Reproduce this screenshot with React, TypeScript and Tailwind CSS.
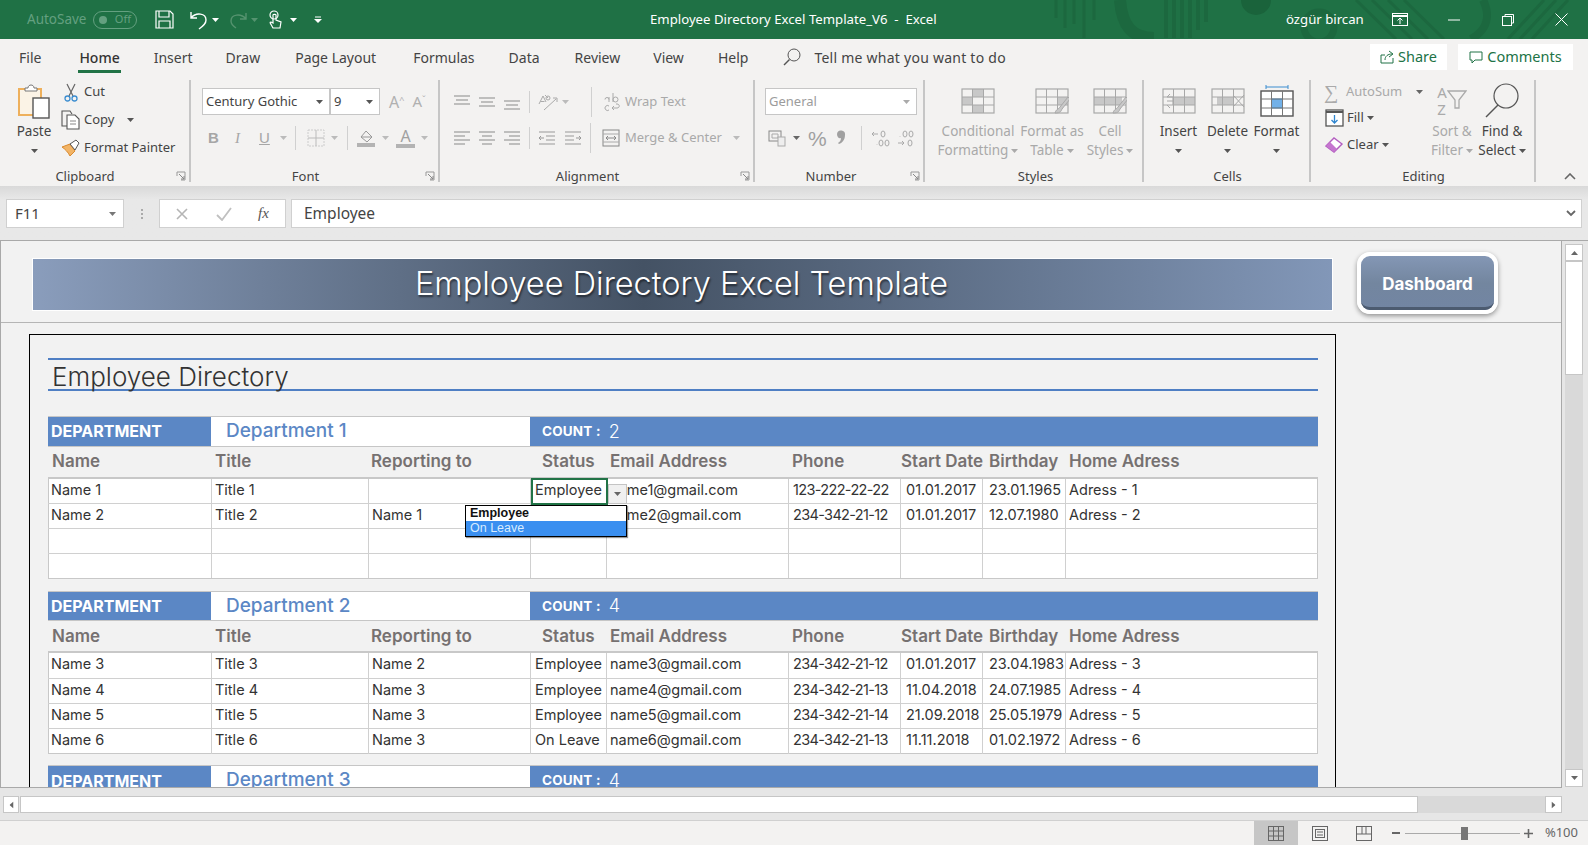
import React from "react";

const Caret = ({ c = "#666", className = "" }: { c?: string; className?: string }) => (
  <svg width="7" height="4" viewBox="0 0 7 4" className={className}><path d="M0 0h7L3.5 4z" fill={c} /></svg>
);

const Lines = ({ kind }: { kind: string }) => {
  const rows: Record<string, string> = {
    top: "M1 2h16M3 6h12M1 10h16",
    mid: "M1 4h16M3 8h12M1 12h16",
    bot: "M1 7h16M3 11h12M1 15h16",
    l: "M1 2h16M1 6h11M1 10h16M1 14h11",
    c: "M1 2h16M4 6h10M1 10h16M4 14h10",
    r: "M1 2h16M6 6h11M1 10h16M6 14h11",
  };
  return <svg width="18" height="16" viewBox="0 0 18 16"><path d={rows[kind]} stroke="#8a8a8a" strokeWidth="1.2" fill="none" /></svg>;
};

const GridIcon = ({ fill, stroke = "#a8a8a8", children }: { fill?: React.ReactNode; stroke?: string; children?: React.ReactNode }) => (
  <svg width="34" height="26" viewBox="0 0 34 26" fill="none">
    {fill}
    <rect x="1" y="1" width="32" height="24" stroke={stroke} strokeWidth="1.2" />
    <path d="M1 9h32M1 17h32M11.5 1v24M22.5 1v24" stroke={stroke} strokeWidth="1" />
    {children}
  </svg>
);

const Brush = () => <path d="M20 25c1-4 4-4 5-6l8-10 2 2-8 10c-1 2-1 4-7 4z" fill="#c8c8c8" stroke="#a8a8a8" />;

const PasteIcon = () => (
  <svg width="34" height="36" viewBox="0 0 34 36" fill="none">
    <rect x="2" y="6" width="22" height="26" stroke="#eeb05c" strokeWidth="2" fill="#fbf3e6" />
    <path d="M8 7V5h3c0-4 6-4 6 0h3v3H8z" fill="#fff" stroke="#777" />
    <rect x="16" y="15" width="16" height="20" fill="#fff" stroke="#555" strokeWidth="1.4" />
  </svg>
);
const CutIcon = () => (
  <svg width="14" height="19" viewBox="0 0 14 19" fill="none">
    <path d="M3 1l6 12M11 1L5 13" stroke="#666" strokeWidth="1.2" />
    <circle cx="3.5" cy="15.5" r="2.5" stroke="#3b8dd0" strokeWidth="1.3" />
    <circle cx="10.5" cy="15.5" r="2.5" stroke="#3b8dd0" strokeWidth="1.3" />
  </svg>
);
const CopyIcon = () => (
  <svg width="20" height="20" viewBox="0 0 20 20" fill="none">
    <path d="M6 16H1V1h8l2 3" stroke="#555" strokeWidth="1.1" />
    <path d="M6 5h8l4 4v10H6z" fill="#fff" stroke="#555" strokeWidth="1.1" />
    <path d="M9 11h6M9 14h6" stroke="#888" />
  </svg>
);
const PainterIcon = () => (
  <svg width="20" height="18" viewBox="0 0 20 18" fill="none">
    <path d="M1 8l8-3 5 7-5 5C7 13 4 10 1 8z" fill="#f2b466" stroke="#d98a2f" />
    <path d="M9 5l6-4 3 3-4 7z" fill="#fff" stroke="#555" />
  </svg>
);

const SmallCmd = ({ icon, text, caret, className = "" }: { icon: React.ReactNode; text: string; caret?: boolean; className?: string }) => (
  <div className={`flex items-center ${className}`}>
    <span className="w-[22px] flex justify-center shrink-0">{icon}</span>
    <span className="text-[13px] text-[#444] ml-[2px]">{text}</span>
    {caret && <Caret className="ml-[3px]" c="#555" />}
  </div>
);

const LargeBtn = ({ icon, lines, w, gray, caret }: { icon: React.ReactNode; lines: string[]; w: string; gray?: boolean; caret?: boolean }) => (
  <div className={`flex flex-col items-center shrink-0 ${w}`}>
    <div className="h-[42px] flex items-center justify-center">{icon}</div>
    {lines.map((l, i) => (
      <div key={i} className={`h-[19px] flex items-center text-[13.5px] whitespace-nowrap ${gray ? "text-[#a9a9a9]" : "text-[#444]"}`}>
        {l}
        {caret && i === lines.length - 1 && <Caret className="ml-[3px]" c={gray ? "#aaa" : "#555"} />}
      </div>
    ))}
    {lines.length === 1 && <div className="h-[19px] flex items-center"><Caret c={gray ? "#aaa" : "#555"} /></div>}
  </div>
);

const Launcher = () => (
  <svg width="10" height="10" viewBox="0 0 10 10" fill="none"><path d="M1 5V1h8v8H5" stroke="#999" /><path d="M3 3l5 5M8 5v3H5" stroke="#888" /></svg>
);

const Group = ({ w, label, labelClass = "", launcher, children }: { w: string; label: string; labelClass?: string; launcher?: boolean; children: React.ReactNode }) => (
  <div className={`relative flex flex-col shrink-0 h-[106px] ${w}`}>
    <div className="h-[88px] flex">{children}</div>
    <div className={`h-[18px] flex items-center justify-center text-[13px] text-[#444] ${labelClass}`}>{label}</div>
    {launcher && <span className="absolute right-[5px] bottom-[5px] flex"><Launcher /></span>}
    <div className="absolute right-0 top-0 bottom-[4px] w-[2px] bg-[#c6c6c6]" />
  </div>
);

const Sep = ({ h = "h-[24px]", className = "" }: { h?: string; className?: string }) => <div className={`w-px bg-[#d0d0d0] shrink-0 ${h} ${className}`} />;

const Dropdown = ({ text, w, gray }: { text: string; w: string; gray?: boolean }) => (
  <div className={`h-[27px] bg-white border border-[#c6c6c6] flex items-center justify-between pl-[3px] pr-[6px] shrink-0 ${w}`}>
    <span className={`text-[13px] ${gray ? "text-[#9c9c9c]" : "text-[#444]"}`}>{text}</span>
    <Caret c={gray ? "#aaa" : "#555"} />
  </div>
);

const Clipboard = () => (
  <Group w="w-[191px]" label="Clipboard" labelClass="pr-[21px]" launcher>
    <div className="pl-[15px] w-[60px]">
      <LargeBtn w="w-[38px]" icon={<PasteIcon />} lines={["Paste"]} />
    </div>
    <div className="flex flex-col -mt-[2px]">
      <SmallCmd className="h-[28px]" icon={<CutIcon />} text="Cut" />
      <SmallCmd className="h-[28px]" icon={<CopyIcon />} text="Copy" />
      <SmallCmd className="h-[28px]" icon={<PainterIcon />} text="Format Painter" />
    </div>
    <Caret className="absolute left-[127px] top-[38px]" c="#555" />
  </Group>
);

const FontGroup = () => (
  <Group w="w-[249px]" label="Font" labelClass="pr-[20px]" launcher>
    <div className="pl-[11px] pt-[8px] flex flex-col">
      <div className="flex items-center">
        <Dropdown w="w-[128px]" text="Century Gothic" />
        <Dropdown w="w-[50px]" text="9" />
        <span className="ml-[9px] text-[16px] text-[#b0b0b0] leading-none">A<sup className="text-[9px]">^</sup></span>
        <span className="ml-[8px] text-[15px] text-[#b0b0b0] leading-none">A<sup className="text-[9px]">ˇ</sup></span>
      </div>
      <div className="flex items-center mt-[9px] h-[28px] text-[#a6a6a6] pl-[6px]">
        <span className="w-[16px] text-[15px] font-bold font-['Liberation_Sans',sans-serif]">B</span>
        <span className="w-[11px]" />
        <span className="w-[12px] text-[15px] italic font-['Liberation_Serif',serif]">I</span>
        <span className="w-[12px]" />
        <span className="w-[16px] text-[15px] underline font-['Liberation_Sans',sans-serif]">U</span>
        <Caret className="ml-[5px]" c="#bbb" />
        <Sep className="ml-[8px]" />
        <svg width="18" height="18" viewBox="0 0 18 18" fill="none" className="ml-[11px]"><rect x="1" y="1" width="16" height="16" stroke="#ccc" strokeDasharray="2 1" /><path d="M9 1v16M1 9h16" stroke="#bbb" /></svg>
        <Caret className="ml-[6px]" c="#bbb" />
        <Sep className="ml-[9px]" />
        <svg width="19" height="20" viewBox="0 0 19 20" fill="none" className="ml-[9px]"><path d="M4 9l5-6 6 6-5 5z" stroke="#999" /><path d="M4 9h11" stroke="#999" /><rect y="15" width="18" height="4" fill="#b3b3b3" /></svg>
        <Caret className="ml-[6px]" c="#bbb" />
        <div className="ml-[7px] w-[19px] flex flex-col items-center leading-none">
          <span className="text-[16px] text-[#a0a0a0]">A</span>
          <span className="w-[19px] h-[4px] bg-[#b3b3b3]" />
        </div>
        <Caret className="ml-[6px]" c="#bbb" />
      </div>
    </div>
  </Group>
);

const Orient = () => (
  <svg width="20" height="18" viewBox="0 0 20 18" fill="none" stroke="#aaa"><path d="M1 11l4-8 3 6M2.5 8.500h4" /><circle cx="10" cy="5" r="2" /><path d="M7 2l3 3" /><path d="M6 17L18 6M15 5h4v4" /></svg>
);
const WrapI = () => (
  <svg width="18" height="20" viewBox="0 0 18 20" fill="none" stroke="#aaa"><path d="M1 7.500a2 2 0 1 1 4 0M5 5v5M9 1v9" /><circle cx="11.500" cy="7.500" r="2.500" /><path d="M5 14a2.500 2.500 0 1 0 0 4M8 16h5c3 0 3-4 0-4h-1M10 14l-2 2 2 2" /></svg>
);
const MergeI = () => (
  <svg width="18" height="18" viewBox="0 0 18 18" fill="none"><rect x="1" y="1" width="16" height="16" stroke="#888" /><path d="M1 5h16M1 13h16" stroke="#aaa" /><path d="M4 9h10M6 7L4 9l2 2M12 7l2 2-2 2" stroke="#888" /></svg>
);
const IndentI = ({ flip }: { flip?: boolean }) => (
  <svg width="18" height="16" viewBox="0 0 18 16" fill="none" className={flip ? "-scale-x-100" : ""}><path d="M1 2h16M8 6h9M8 10h9M1 14h16" stroke="#999" /><path d="M6 8H1M3 6L1 8l2 2" stroke="#999" /></svg>
);

const Alignment = () => (
  <Group w="w-[315px]" label="Alignment" labelClass="pr-[20px]" launcher>
    <div className="pl-[13px] pt-[8px] flex flex-col">
      <div className="h-[27px] flex items-center">
        <span className="w-[25px]"><Lines kind="top" /></span>
        <span className="w-[25px]"><Lines kind="mid" /></span>
        <span className="w-[26px]"><Lines kind="bot" /></span>
        <Sep h="h-[22px]" className="mr-[8px]" />
        <Orient />
        <Caret className="ml-[4px]" c="#bbb" />
        <Sep className="ml-[22px] mr-[12px]" h="h-[30px]" />
        <WrapI />
        <span className="text-[13px] text-[#a9a9a9] ml-[3px]">Wrap Text</span>
      </div>
      <div className="h-[28px] flex items-center mt-[9px]">
        <span className="w-[25px]"><Lines kind="l" /></span>
        <span className="w-[25px]"><Lines kind="c" /></span>
        <span className="w-[26px]"><Lines kind="r" /></span>
        <Sep h="h-[22px]" className="mr-[8px]" />
        <IndentI />
        <span className="w-[8px]" />
        <IndentI flip />
        <Sep className="ml-[8px] mr-[11px]" h="h-[30px]" />
        <MergeI />
        <span className="text-[13px] text-[#a9a9a9] ml-[5px]">Merge &amp; Center</span>
        <Caret className="ml-[11px]" c="#bbb" />
      </div>
    </div>
  </Group>
);

const NumberG = () => (
  <Group w="w-[170px]" label="Number" labelClass="pr-[18px]" launcher>
    <div className="pl-[10px] pt-[8px] flex flex-col">
      <Dropdown w="w-[152px]" text="General" gray />
      <div className="h-[28px] flex items-center mt-[9px] pl-[3px]">
        <svg width="18" height="18" viewBox="0 0 18 18" fill="none"><rect x="1" y="2" width="12" height="10" stroke="#888" /><path d="M4 5h6v4H4z" stroke="#aaa" /><rect x="10" y="8" width="7" height="9" fill="#eee" stroke="#aaa" /></svg>
        <Caret className="ml-[7px]" c="#666" />
        <span className="ml-[8px] text-[21px] leading-none text-[#a0a0a0] font-['Liberation_Sans',sans-serif]">%</span>
        <svg width="10" height="16" viewBox="0 0 10 16" className="ml-[9px]"><path d="M1 4a4 4 0 1 1 8 1c0 5-3 8-6 9l-1-1c2-1 3-3 3-5-2 1-4-1-4-4z" fill="#a0a0a0" /></svg>
        <Sep className="ml-[15px]" />
        <svg width="19" height="18" viewBox="0 0 19 18" fill="none" stroke="#aaa" className="ml-[9px]"><path d="M7 5H1M3 3L1 5l2 2" /><ellipse cx="12" cy="5" rx="2" ry="3" /><path d="M6 15v.5" /><ellipse cx="10" cy="14" rx="2" ry="3" /><ellipse cx="16" cy="14" rx="2" ry="3" /></svg>
        <svg width="19" height="18" viewBox="0 0 19 18" fill="none" stroke="#aaa" className="ml-[7px]"><path d="M3 7v.5" /><ellipse cx="8" cy="5" rx="2" ry="3" /><ellipse cx="14" cy="5" rx="2" ry="3" /><path d="M1 14h6M5 12l2 2-2 2" /><ellipse cx="13" cy="14" rx="2" ry="3" /></svg>
      </div>
    </div>
  </Group>
);

const Styles = () => (
  <Group w="w-[219px]" label="Styles" labelClass="pl-[2px]">
    <div className="flex pl-[7px]">
      <LargeBtn w="w-[92px]" gray caret icon={<GridIcon fill={<path d="M11 1h11v8H11zM1 9h10v8H1zM11 17h11v8H11z" fill="#c8c8c8" />} />} lines={["Conditional", "Formatting"]} />
      <LargeBtn w="w-[56px]" gray caret icon={<GridIcon fill={<path d="M22 9h11v8H22z" fill="#c8c8c8" />}><Brush /></GridIcon>} lines={["Format as", "Table"]} />
      <LargeBtn w="w-[60px]" gray caret icon={<GridIcon fill={<path d="M1 9h28v8H1z" fill="#c8c8c8" />}><Brush /></GridIcon>} lines={["Cell", "Styles"]} />
    </div>
  </Group>
);

const Cells = () => (
  <Group w="w-[167px]" label="Cells">
    <div className="flex pl-[10px]">
      <LargeBtn w="w-[49px]" icon={<GridIcon fill={<path d="M10 9h23v8H10z" fill="#c8c8c8" />}><path d="M12 9H5l3-3M5 17l3 3M5 13h7" stroke="#a8a8a8" fill="none" /></GridIcon>} lines={["Insert"]} />
      <LargeBtn w="w-[49px]" icon={<GridIcon fill={<path d="M6 9h16v8H6z" fill="#c8c8c8" />}><path d="M22 7l11 12M33 7L22 19" stroke="#a8a8a8" /></GridIcon>} lines={["Delete"]} />
      <LargeBtn w="w-[49px]" icon={<svg width="34" height="32" viewBox="0 0 34 32" fill="none"><path d="M6 2h22M6 0v4M28 0v4" stroke="#3b8dd0" /><rect x="1" y="6" width="32" height="25" fill="#fff" stroke="#555" strokeWidth="1.4" /><rect x="11.5" y="14" width="11" height="9" fill="#72b1e8" stroke="#3b8dd0" /><path d="M1 14h32M1 23h32M11.5 6v25M22.5 6v25" stroke="#777" /></svg>} lines={["Format"]} />
    </div>
  </Group>
);

const Editing = () => (
  <Group w="w-[225px]" label="Editing">
    <div className="flex pl-[13px]">
      <div className="w-[103px] flex flex-col -mt-[1px]">
        <div className="h-[26px] flex items-center">
          <span className="w-[22px] text-[20px] leading-none text-[#aaa] font-['Liberation_Serif',serif]">∑</span>
          <span className="text-[13px] text-[#a9a9a9]">AutoSum</span>
          <Caret className="ml-[14px]" c="#666" />
        </div>
        <SmallCmd className="h-[26px] -ml-[1px]" caret text="Fill" icon={<svg width="19" height="18" viewBox="0 0 19 18" fill="none"><rect x="1" y="1" width="17" height="16" fill="#fff" stroke="#555" strokeWidth="1.3" /><path d="M1 3h17" stroke="#555" strokeWidth="2" /><path d="M9.5 6v8M6.5 11l3 3 3-3" stroke="#2f86d0" strokeWidth="1.3" /></svg>} />
        <SmallCmd className="h-[26px] -ml-[1px] mt-px" caret text="Clear" icon={<svg width="19" height="18" viewBox="0 0 19 18" fill="none"><path d="M1 10l8-8 8 6-8 8z" fill="#fff" stroke="#b35ec0" strokeWidth="1.4" /><path d="M1 10l4-4 7 7-3 3z" fill="#c576cf" /></svg>} />
      </div>
      <LargeBtn w="w-[50px]" gray caret icon={<div className="flex items-center"><div className="flex flex-col text-[15px] leading-[17px] text-[#aaa]"><span>A</span><span>Z</span></div><svg width="20" height="20" viewBox="0 0 20 20" fill="none" className="mb-[4px]"><path d="M1 2h18l-7 9v8H8v-8z" stroke="#aaa" strokeWidth="1.3" /></svg></div>} lines={["Sort &", "Filter"]} />
      <LargeBtn w="w-[50px]" caret icon={<svg width="34" height="36" viewBox="0 0 34 36" fill="none"><circle cx="21" cy="13" r="12" stroke="#555" strokeWidth="1.2" /><path d="M13 22L1 34" stroke="#555" strokeWidth="1.4" /></svg>} lines={["Find &", "Select"]} />
    </div>
  </Group>
);

const Tab = ({ children, ml, active }: { children: string; ml: string; active?: boolean }) => (
  <div className={`relative h-[37px] flex items-center text-[14px] ${ml} ${active ? "text-[#333] font-medium" : "text-[#444]"}`}>
    {children}
    {active && <span className="absolute left-[-1px] right-[-1px] top-[31px] h-[3px] bg-[#217346]" />}
  </div>
);

const TitleBar = () => (
  <div className="h-[39px] bg-[#1f7145] relative flex items-center text-white overflow-hidden font-['Noto_Sans',sans-serif]">
    <svg width="560" height="39" viewBox="0 0 560 39" className="absolute right-0 top-0" fill="none" stroke="#1c683f">
      <path d="M28 0v18M37 0v28M46 0v24M56 0v38M66 0v20" strokeWidth="3" />
      <path d="M92 0c2 26 12 38 34 38" strokeWidth="12" />
      <path d="M138 0v38M146 0v38M154 0v38M162 0v38M170 0v30M178 0v22" strokeWidth="4" />
      <circle cx="228" cy="0" r="15" fill="#1a633b" stroke="none" />
      <circle cx="291" cy="27" r="15" strokeWidth="7" />
      <path d="M328 0l40 39M344 0l40 39M360 0l40 39M376 0l40 39" strokeWidth="3" />
      <path d="M455 0c8 16 4 30-12 39" strokeWidth="8" />
      <path d="M480 39l36-39M492 39l36-39M504 39l36-39" strokeWidth="3" />
    </svg>
    <div className="relative flex items-center pl-[27px] w-full">
      <span className="text-[13.5px] text-[#64a080] w-[66px]">AutoSave</span>
      <div className="w-[44px] h-[18px] rounded-full border border-[#64a080] flex items-center justify-between px-[5px] text-[11px] text-[#64a080]">
        <span className="w-[8px] h-[8px] rounded-full bg-[#64a080]" />
        Off
      </div>
      <svg width="19" height="19" viewBox="0 0 19 19" fill="none" stroke="#fff" strokeWidth="1.2" className="ml-[18px]"><path d="M1 1h14l3 3v14H1z" /><path d="M4 1v6h10V1M4 18v-7h11v7" /></svg>
      <svg width="18" height="20" viewBox="0 0 18 20" fill="none" stroke="#fff" strokeWidth="1.4" className="ml-[16px]"><path d="M1 2v6h6M1 8c5-6 15-5 15 2 0 4-3 6-7 9" /></svg>
      <Caret c="#fff" className="ml-[4px]" />
      <svg width="18" height="18" viewBox="0 0 18 18" fill="none" stroke="#55936f" strokeWidth="1.4" className="ml-[10px]"><path d="M17 2v6h-6M17 8C12 2 2 3 2 10c0 3 2 5 5 7" /></svg>
      <Caret c="#55936f" className="ml-[4px]" />
      <svg width="14" height="20" viewBox="0 0 14 20" fill="none" stroke="#fff" strokeWidth="1.2" className="ml-[10px]"><circle cx="6" cy="5" r="4" /><path d="M5 5v8l-2-1c-2 0 0 2 2 6h7l1-6-5-2V5c0-1-3-1-3 0z" /></svg>
      <Caret c="#fff" className="ml-[8px]" />
      <svg width="8" height="8" viewBox="0 0 8 8" className="ml-[17px]"><path d="M1 1h6" stroke="#fff" /><path d="M0 3h8L4 7z" fill="#fff" /></svg>
      <span className="absolute left-[650px] text-[13.2px] whitespace-nowrap">Employee Directory Excel Template_V6&nbsp; -&nbsp; Excel</span>
      <span className="absolute left-[1286px] text-[13.2px] whitespace-nowrap">özgür bircan</span>
      <svg width="16" height="13" viewBox="0 0 16 13" fill="none" stroke="#fff" className="absolute left-[1392px]"><rect x=".5" y=".5" width="15" height="12" /><path d="M.5 3h15" strokeWidth="2" /><path d="M8 11V5M5.5 7.5L8 5l2.5 2.5" /></svg>
      <svg width="12" height="2" className="absolute left-[1448px]"><path d="M0 1h12" stroke="#fff" /></svg>
      <svg width="12" height="12" viewBox="0 0 12 12" fill="none" stroke="#fff" className="absolute left-[1502px]"><rect x=".5" y="2.5" width="9" height="9" /><path d="M3 2.5V.5h8.5V9H9.5" /></svg>
      <svg width="13" height="13" viewBox="0 0 13 13" stroke="#fff" className="absolute left-[1555px]"><path d="M.5.5l12 12M12.5.5l-12 12" /></svg>
    </div>
  </div>
);

const TabsRow = () => (
  <div className="h-[41px] flex items-start">
    <Tab ml="ml-[19px]">File</Tab>
    <Tab ml="ml-[38px]" active>Home</Tab>
    <Tab ml="ml-[34px]">Insert</Tab>
    <Tab ml="ml-[33px]">Draw</Tab>
    <Tab ml="ml-[35px]">Page Layout</Tab>
    <Tab ml="ml-[37px]">Formulas</Tab>
    <Tab ml="ml-[34px]">Data</Tab>
    <Tab ml="ml-[35px]">Review</Tab>
    <Tab ml="ml-[33px]">View</Tab>
    <Tab ml="ml-[34px]">Help</Tab>
    <svg width="18" height="18" viewBox="0 0 18 18" fill="none" stroke="#555" className="ml-[35px] mt-[9px]"><circle cx="11" cy="7" r="6" /><path d="M6.5 11.5L1 17" strokeWidth="1.4" /></svg>
    <span className="ml-[13px] h-[37px] flex items-center text-[14px] text-[#444] tracking-[0.25px]">Tell me what you want to do</span>
    <div className="ml-auto flex mr-[15px] mt-[5px] gap-[11px]">
      <div className="w-[77px] h-[26px] bg-white flex items-center justify-center gap-[4px] text-[14.5px] text-[#217346]">
        <svg width="14" height="14" viewBox="0 0 14 14" fill="none" stroke="#217346"><path d="M1 13V5h4M1 13h12V8M5 10c0-4 3-6 7-6M9 1l4 3-4 3" /></svg>
        Share
      </div>
      <div className="w-[115px] h-[26px] bg-white flex items-center justify-center gap-[4px] text-[14.5px] text-[#217346]">
        <svg width="14" height="13" viewBox="0 0 14 13" fill="none" stroke="#217346"><path d="M1 1h12v8H6l-3 3V9H1z" /></svg>
        Comments
      </div>
    </div>
  </div>
);

const Ribbon = () => (
  <div className="bg-[#f3f2f1] h-[147px] relative font-['Noto_Sans',sans-serif]">
    <TabsRow />
    <div className="flex">
      <Clipboard />
      <FontGroup />
      <Alignment />
      <NumberG />
      <Styles />
      <Cells />
      <Editing />
      <div className="flex-1 flex items-end justify-end pr-[12px] pb-[6px]">
        <svg width="12" height="7" viewBox="0 0 12 7" fill="none" stroke="#666" strokeWidth="1.6"><path d="M1 6l5-5 5 5" /></svg>
      </div>
    </div>
  </div>
);

const FormulaBar = () => (
  <div className="h-[54px] flex items-start pt-[13px] pl-[6px] font-['Noto_Sans',sans-serif] bg-gradient-to-b from-[#d9d9d9] to-[#e8e8e8] to-[25%]">
    <div className="w-[118px] h-[29px] bg-white border border-[#d0d0d0] flex items-center justify-between pl-[8px] pr-[7px] text-[15px] text-[#444]">
      F11
      <Caret c="#777" />
    </div>
    <div className="w-[35px] h-[29px] flex flex-col items-center justify-center gap-[2px]">
      {[0, 1, 2].map((i) => <span key={i} className="w-[2px] h-[2px] bg-[#aaa]" />)}
    </div>
    <div className="w-[127px] h-[29px] bg-white border border-[#d0d0d0] flex items-center pl-[15px] text-[#b5b5b5]">
      <svg width="14" height="14" viewBox="0 0 14 14" stroke="#b5b5b5" strokeWidth="1.6"><path d="M2 2l10 10M12 2L2 12" /></svg>
      <svg width="16" height="14" viewBox="0 0 16 14" fill="none" stroke="#c0c0c0" strokeWidth="1.8" className="ml-[27px]"><path d="M1 8l5 5L15 1" /></svg>
      <span className="ml-[26px] text-[15px] italic text-[#555] font-['Liberation_Serif',serif]">fx</span>
    </div>
    <div className="w-[1291px] ml-[5px] h-[29px] bg-white border border-[#d0d0d0] flex items-center justify-between pl-[12px] pr-[5px] text-[15.5px] text-[#444]">
      Employee
      <svg width="10" height="7" viewBox="0 0 10 7" fill="none" stroke="#666" strokeWidth="1.8"><path d="M1 1l4 4 4-4" /></svg>
    </div>
  </div>
);

const COLS = "grid grid-cols-[163px_157px_162px_76px_182px_112px_82px_83px_253px]";
const HEAD = ["Name", "Title", "Reporting to", "Status", "Email Address", "Phone", "Start Date", "Birthday", "Home Adress"];
const HEADX = ["pl-[4px]", "pl-[4px]", "pl-[3px]", "pl-[12px]", "pl-[4px]", "pl-[4px]", "pl-[1px]", "pl-[7px]", "pl-[4px]"];
const CELLX = ["pl-[3px]", "pl-[3px]", "pl-[3px]", "pl-[4px]", "pl-[3px]", "pl-[4px] tracking-[-0.65px]", "pl-[5px]", "pl-[6px]", "pl-[3px]"];

const SelectedOverlay = () => (
  <>
    <div className="absolute left-0 top-[-1px] w-[77px] h-[27px] border-2 border-[#217346] pointer-events-none z-10" />
    <div className="absolute left-[77px] top-[5px] w-[19px] h-[20px] bg-[#f0f0f0] border border-[#c4c4c4] flex items-center justify-center z-10">
      <Caret c="#666" />
    </div>
    <div className="absolute left-[-66px] top-[26px] w-[162px] h-[32px] bg-white border border-black shadow-[1px_1px_1px_rgba(0,0,0,0.4)] z-20 font-['Liberation_Sans',sans-serif] text-[12.5px] leading-[15px]">
      <div className="pl-[4px] text-[#111] font-semibold">Employee</div>
      <div className="pl-[4px] bg-[#3a8ff0] text-[#d8ecff]">On Leave</div>
    </div>
  </>
);

type Row = string[];
const Section = ({ name, count, rows, selected, clipped }: { name: string; count: number; rows: Row[]; selected?: boolean; clipped?: boolean }) => (
  <div className="w-[1270px] shrink-0 mb-[11.6px]">
    <div className="h-[30.5px] flex border-y border-[#c6c6c6]">
      <div className="w-[163px] bg-[#5b87c5] text-white font-bold text-[16px] flex items-center pl-[3px]">DEPARTMENT</div>
      <div className="w-[319px] bg-white text-[#5b87c5] text-[19px] flex items-center pl-[15px] font-medium">{name}</div>
      <div className="flex-1 bg-[#5b87c5] text-white flex items-center pl-[12px]">
        <span className="font-bold text-[13.5px] tracking-[0.2px]">COUNT :</span>
        <span className="ml-[8px] text-[18px] font-light">{count}</span>
      </div>
    </div>
    {!clipped && (
      <>
        <div className={`${COLS} h-[30px] pt-[1px] items-center text-[17px] font-semibold text-[#767171]`}>
          {HEAD.map((h, i) => <div key={h} className={`${HEADX[i]} whitespace-nowrap`}>{h}</div>)}
        </div>
        <div className="border-x border-b border-t-2 border-[#c8c8c8] bg-white">
          {rows.map((r, ri) => (
            <div key={ri} className={`${COLS} h-[24.9px] -mx-px ${ri ? "border-t border-[#d0d0d0]" : ""}`}>
              {r.map((c, ci) => (
                <div key={ci} className={`relative flex items-center pb-[3px] text-[14.5px] text-[#333] whitespace-nowrap ${CELLX[ci]} ${ci ? "border-l border-[#d0d0d0]" : ""}`}>
                  {c}
                  {selected && ri === 0 && ci === 3 && <SelectedOverlay />}
                </div>
              ))}
            </div>
          ))}
        </div>
      </>
    )}
  </div>
);

const S1: Row[] = [
  ["Name 1", "Title 1", "", "Employee", "name1@gmail.com", "123-222-22-22", "01.01.2017", "23.01.1965", "Adress - 1"],
  ["Name 2", "Title 2", "Name 1", "", "name2@gmail.com", "234-342-21-12", "01.01.2017", "12.07.1980", "Adress - 2"],
  ["", "", "", "", "", "", "", "", ""],
  ["", "", "", "", "", "", "", "", ""],
];
const S2: Row[] = [
  ["Name 3", "Title 3", "Name 2", "Employee", "name3@gmail.com", "234-342-21-12", "01.01.2017", "23.04.1983", "Adress - 3"],
  ["Name 4", "Title 4", "Name 3", "Employee", "name4@gmail.com", "234-342-21-13", "11.04.2018", "24.07.1985", "Adress - 4"],
  ["Name 5", "Title 5", "Name 3", "Employee", "name5@gmail.com", "234-342-21-14", "21.09.2018", "25.05.1979", "Adress - 5"],
  ["Name 6", "Title 6", "Name 3", "On Leave", "name6@gmail.com", "234-342-21-13", "11.11.2018", "01.02.1972", "Adress - 6"],
];

const Sheet = () => (
  <div className="h-[548px] flex border-t border-[#a9a9a9] bg-[#e6e6e6]">
    <div className="w-[1562px] border-l border-r border-b border-[#a9a9a9] bg-[#f2f2f2] overflow-hidden flex flex-col font-['Inter',sans-serif]">
      <div className="h-[82px] shrink-0 border-b border-[#b5b5b5] flex items-start">
        <div className="ml-[31px] mt-[17px] w-[1301px] h-[53px] border border-white bg-gradient-to-r from-[#8a9dbc] via-[#445264] via-[47%] to-[#8297b8] flex items-center justify-center text-white text-[32.5px] font-light [text-shadow:1px_2px_2px_rgba(0,0,0,0.55)] pr-[2px]">
          Employee Directory Excel Template
        </div>
        <div className="ml-[24px] mt-[11px] w-[141px] h-[62px] rounded-[13px] border-[4px] border-white shadow-[0_2px_5px_rgba(0,0,0,0.4)] bg-gradient-to-b from-[#8497b5] via-[#73869f] to-[#7285a3] text-white font-bold text-[17px]">
          <div className="w-full h-full rounded-[9px] border-b-[3px] border-[#4c5b70] flex items-center justify-center pt-[6px]">Dashboard</div>
        </div>
      </div>
      <div className="ml-[28px] mt-[11px] w-[1307px] flex-1 border-l border-t border-r border-black pl-[18px] pt-[23px] overflow-hidden flex flex-col">
        <div className="w-[1270px] h-[33px] border-y-2 border-[#4f7fc4] flex items-center pl-[4px] pt-[3px] text-[26px] font-light text-[#333] shrink-0 whitespace-nowrap">Employee Directory</div>
        <div className="h-[25px] shrink-0" />
        <Section name="Department 1" count={2} rows={S1} selected />
        <Section name="Department 2" count={4} rows={S2} />
        <Section name="Department 3" count={4} rows={[]} clipped />
      </div>
    </div>
    <div className="flex-1 flex flex-col items-center pt-[3px] pl-[1px] pr-[3px]">
      <div className="w-[18px] h-[17px] bg-white border border-[#c6c6c6] flex items-center justify-center"><Caret className="rotate-180" c="#666" /></div>
      <div className="w-[18px] flex-1 bg-[#d9d9d9] flex flex-col">
        <div className="h-[114px] bg-white border border-[#c6c6c6]" />
      </div>
      <div className="w-[18px] h-[18px] bg-white border border-[#c6c6c6] flex items-center justify-center mb-[1px]"><Caret c="#666" /></div>
    </div>
  </div>
);

const HScroll = () => (
  <div className="h-[33px] bg-[#e6e6e6] pt-[8px] pl-[3px] border-b border-[#d0d0d0]">
    <div className="flex h-[17px] w-[1559px]">
      <div className="w-[16px] bg-white border border-[#c6c6c6] flex items-center justify-center"><Caret className="rotate-90" c="#666" /></div>
      <div className="w-[1398px] ml-px bg-white border border-[#c6c6c6]" />
      <div className="flex-1 bg-[#d9d9d9]" />
      <div className="w-[17px] bg-white border border-[#c6c6c6] flex items-center justify-center"><Caret className="-rotate-90" c="#666" /></div>
    </div>
  </div>
);

const StatusBar = () => (
  <div className="h-[24px] bg-[#f3f2f1] flex items-stretch justify-end font-['Noto_Sans',sans-serif]">
    <div className="w-[44px] bg-[#c6c6c6] flex items-center justify-center">
      <svg width="16" height="15" viewBox="0 0 16 15" fill="none" stroke="#666"><rect x=".5" y=".5" width="15" height="14" /><path d="M.5 5h15M.5 10h15M5.5.5v14M10.5.5v14" /></svg>
    </div>
    <div className="w-[44px] flex items-center justify-center">
      <svg width="16" height="15" viewBox="0 0 16 15" fill="none" stroke="#666"><rect x=".5" y=".5" width="15" height="14" /><rect x="3.5" y="3.5" width="9" height="8" /><path d="M5 6h6M5 9h6" /></svg>
    </div>
    <div className="w-[44px] flex items-center justify-center">
      <svg width="16" height="15" viewBox="0 0 16 15" fill="none" stroke="#666"><rect x=".5" y=".5" width="15" height="14" /><path d="M.5 8h15M6 .5V8M10 .5V8" /></svg>
    </div>
    <div className="flex items-center ml-[6px] text-[#666]">
      <span className="w-[8px] h-[2px] bg-[#666]" />
      <div className="w-[115px] h-[1px] bg-[#aaa] ml-[5px] flex items-center pl-[56px]"><span className="w-[7px] h-[13px] bg-[#777] shrink-0" /></div>
      <svg width="9" height="9" viewBox="0 0 9 9" stroke="#666" strokeWidth="1.6" className="ml-[4px]"><path d="M0 4.5h9M4.5 0v9" /></svg>
      <span className="ml-[12px] mr-[10px] text-[13px] text-[#666]">%100</span>
    </div>
  </div>
);

export default function App() {
  return (
    <div className="w-[1588px] h-[845px] overflow-hidden bg-[#e6e6e6] flex flex-col">
      <TitleBar />
      <Ribbon />
      <FormulaBar />
      <Sheet />
      <HScroll />
      <StatusBar />
    </div>
  );
}
